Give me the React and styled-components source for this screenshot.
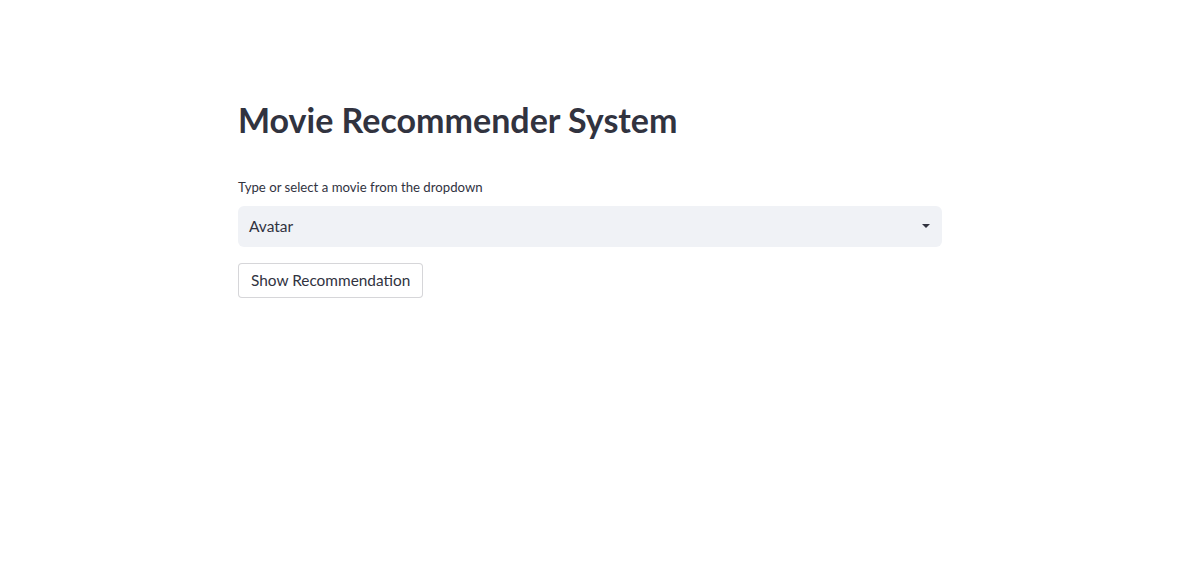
import React, { useState } from "react";
import styled, { createGlobalStyle } from "styled-components";

const GlobalStyle = createGlobalStyle`
  html, body {
    margin: 0;
    padding: 0;
    background: #ffffff;
  }
  body {
    font-family: "Lato", "Noto Sans", sans-serif;
    color: #31333f;
  }
`;

const Page = styled.div`
  width: 1194px;
  height: 575px;
  background: #ffffff;
`;

const Main = styled.main`
  width: 704px;
  margin-left: 238px;
  padding-top: 95px;
  display: flex;
  flex-direction: column;
`;

const Title = styled.h1`
  margin: 0;
  padding: 5px 0 18px;
  font-size: 34px;
  line-height: 1.2;
  font-weight: 700;
  color: #31333f;
`;

const Field = styled.div`
  display: flex;
  flex-direction: column;
  margin-top: 18px;
`;

const Label = styled.label`
  font-size: 13.2px;
  line-height: 1.6;
  color: #31333f;
  margin-bottom: 8px;
`;

const SelectBox = styled.div`
  height: 41px;
  background: #f0f2f6;
  border-radius: 6px;
  display: flex;
  align-items: center;
  justify-content: space-between;
  padding: 0 10px 0 11px;
  box-sizing: border-box;
  cursor: pointer;
`;

const SelectValue = styled.span`
  font-size: 15.5px;
  color: #31333f;
`;

const Caret = styled.span`
  width: 0;
  height: 0;
  border-left: 4px solid transparent;
  border-right: 4px solid transparent;
  border-top: 4px solid #31333f;
  margin-right: 2px;
`;

const Button = styled.button`
  align-self: flex-start;
  margin-top: 16px;
  height: 35px;
  padding: 0 12px;
  background: #ffffff;
  border: 1px solid rgba(49, 51, 63, 0.2);
  border-radius: 4px;
  font-family: inherit;
  font-size: 15.4px;
  color: #31333f;
  cursor: pointer;
`;

export default function App() {
  const [movie] = useState("Avatar");
  return (
    <Page>
      <GlobalStyle />
      <Main>
        <Title>Movie Recommender System</Title>
        <Field>
          <Label>Type or select a movie from the dropdown</Label>
          <SelectBox>
            <SelectValue>{movie}</SelectValue>
            <Caret />
          </SelectBox>
        </Field>
        <Button>Show Recommendation</Button>
      </Main>
    </Page>
  );
}
